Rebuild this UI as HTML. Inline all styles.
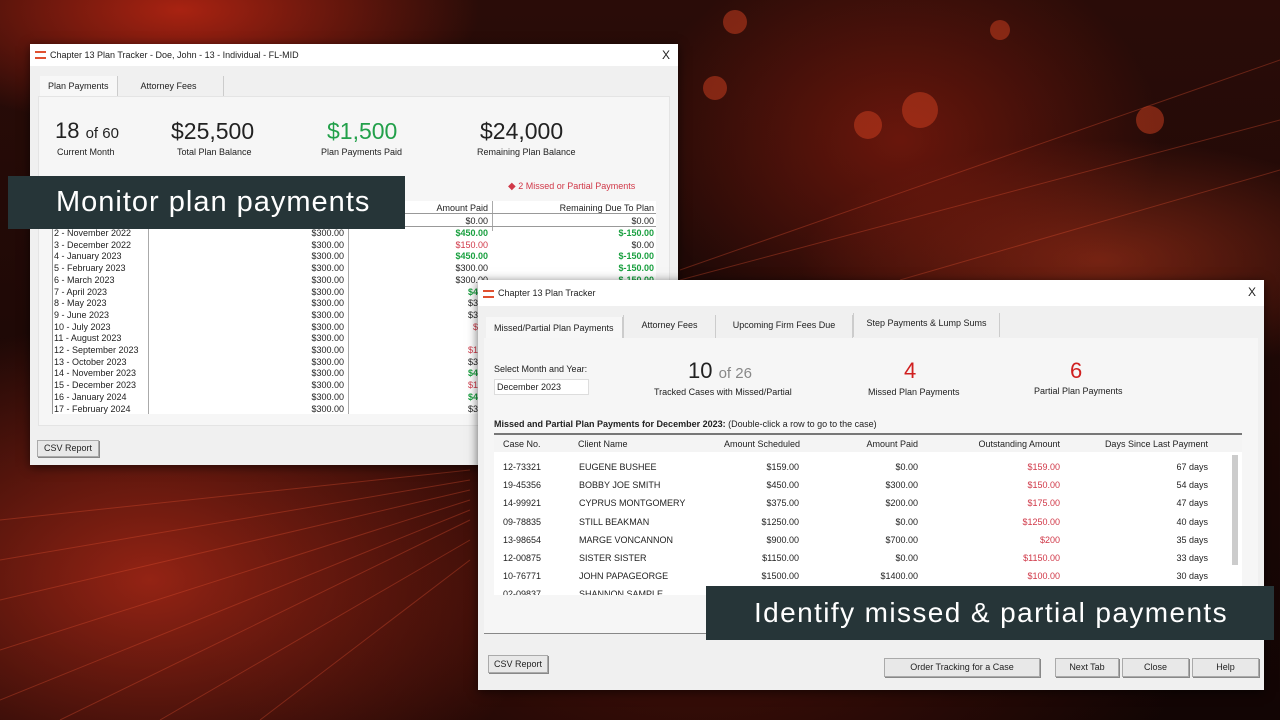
<!DOCTYPE html>
<html><head><meta charset="utf-8"><style>
*{margin:0;padding:0;box-sizing:border-box}
body{width:1280px;height:720px;overflow:hidden;position:relative;font-family:"Liberation Sans",sans-serif;background:#1a0806}
.bg{position:absolute;inset:0;background:
radial-gradient(ellipse 300px 120px at 180px 10px,rgba(200,40,20,.8),transparent),
radial-gradient(ellipse 260px 200px at 900px 140px,rgba(150,30,15,.6),transparent),
radial-gradient(ellipse 400px 260px at 150px 580px,rgba(190,45,25,.75),transparent),
radial-gradient(ellipse 300px 120px at 1100px 260px,rgba(200,60,30,.5),transparent),
radial-gradient(ellipse 500px 300px at 700px 600px,rgba(90,20,10,.7),transparent),
linear-gradient(#2a0c08,#120504)}
.win{position:absolute;background:#f0f0f0;box-shadow:0 2px 10px rgba(0,0,0,.6);font-size:9px;color:#222}
.tb{height:22px;background:#fff;display:flex;align-items:center;padding-left:20px;font-size:9px;position:relative}
.tb .ic{position:absolute;left:5px;top:7px;width:11px;height:8px;border-top:2px solid #e05030;border-bottom:2px solid #e05030}
.tb .x{position:absolute;right:8px;top:4px;font-size:12px}
.tab{position:absolute;font-size:9px;padding:0 8px;border-right:1px solid #ccc;height:20px;line-height:20px}
.cap{position:absolute;background:#263538;color:#fff;font-size:29px;font-weight:300;display:flex;align-items:center}
.t{position:absolute;white-space:nowrap}
.r{text-align:right}
.g{color:#1aa040;font-weight:bold}.red{color:#d03848}
.btn{position:absolute;border:1px solid #aaa;background:#e8e8e8;font-size:9px;text-align:center;box-shadow:1px 1px 0 #888}
</style></head><body>
<div class="bg"></div>
<svg style="position:absolute;left:0;top:0" width="1280" height="720">
<g stroke="#e05030" stroke-width="1" opacity=".35">
<line x1="0" y1="520" x2="470" y2="470"/><line x1="0" y1="560" x2="470" y2="480"/><line x1="0" y1="600" x2="470" y2="490"/><line x1="0" y1="650" x2="470" y2="500"/><line x1="0" y1="700" x2="470" y2="510"/>
<line x1="60" y1="720" x2="470" y2="520"/><line x1="160" y1="720" x2="470" y2="540"/><line x1="260" y1="720" x2="470" y2="560"/>
<line x1="680" y1="280" x2="1280" y2="120"/><line x1="680" y1="270" x2="1280" y2="60"/><line x1="900" y1="280" x2="1280" y2="170"/>
</g>
<g fill="#d04020" opacity=".5"><circle cx="735" cy="22" r="12"/><circle cx="715" cy="88" r="12"/><circle cx="868" cy="125" r="14"/><circle cx="920" cy="110" r="18"/><circle cx="1000" cy="30" r="10"/><circle cx="1150" cy="120" r="14"/></g>
</svg>

<div class="win" style="left:30px;top:44px;width:648px;height:421px">
<div class="tb"><div class="ic"></div>Chapter 13 Plan Tracker - Doe, John - 13 - Individual - FL-MID<span class="x">X</span></div>
<div class="tab" style="left:10px;top:32px;background:#f7f7f7">Plan Payments</div>
<div class="tab" style="left:84px;top:32px;width:110px;text-align:center">Attorney Fees</div>
<div style="position:absolute;left:8px;top:52px;width:632px;height:330px;background:#f6f6f6;border:1px solid #e4e4e4"></div>
<div class="t" style="left:25px;top:74px;font-size:22px">18 <span style="font-size:15px">of 60</span></div>
<div class="t" style="left:27px;top:103px">Current Month</div>
<div class="t" style="left:141px;top:74px;font-size:23px">$25,500</div>
<div class="t" style="left:147px;top:103px">Total Plan Balance</div>
<div class="t" style="left:297px;top:74px;font-size:23px;color:#22a04a">$1,500</div>
<div class="t" style="left:291px;top:103px">Plan Payments Paid</div>
<div class="t" style="left:450px;top:74px;font-size:23px">$24,000</div>
<div class="t" style="left:447px;top:103px">Remaining Plan Balance</div>
<div class="t red" style="left:478px;top:137px"><span style="font-size:10px">◆</span> 2 Missed or Partial Payments</div>
<div style="position:absolute;left:22px;top:157px;width:604px;height:213px;background:#fff;border-left:1px solid #999">
<div style="position:absolute;left:95px;top:0;bottom:0;border-left:1px solid #aaa"></div>
<div style="position:absolute;left:295px;top:0;bottom:0;border-left:1px solid #aaa"></div>
<div style="position:absolute;left:439px;top:0;height:30px;border-left:1px solid #aaa"></div>
<div style="position:absolute;left:0;right:0;top:12px;border-top:1px solid #999"></div>
<div style="position:absolute;left:0;right:0;top:25px;border-top:1px solid #999"></div>
<div class="t r" style="right:168px;top:2px">Amount Paid</div><div class="t r" style="right:2px;top:2px">Remaining Due To Plan</div>
<div class="t r" style="right:168px;top:15px">$0.00</div><div class="t r" style="right:2px;top:15px">$0.00</div>
</div>
<div id="lrows"></div>
<div class="btn" style="left:7px;top:396px;width:62px;height:17px;line-height:15px">CSV Report</div>
</div>

<div class="cap" style="left:8px;top:176px;width:397px;height:53px;padding-left:48px;letter-spacing:1px">Monitor plan payments</div>

<div class="win" style="left:478px;top:280px;width:786px;height:410px">
<div class="tb" style="height:26px"><div class="ic" style="top:10px"></div>Chapter 13 Plan Tracker<span class="x" style="top:5px">X</span></div>
<div class="tab" style="left:8px;top:37px;width:137px;height:22px;line-height:22px;background:#f7f7f7">Missed/Partial Plan Payments</div>
<div class="tab" style="left:145px;top:35px;height:24px;width:93px;text-align:center;border-left:1px solid #ccc">Attorney Fees</div>
<div class="tab" style="left:238px;top:35px;height:24px;width:137px;text-align:center">Upcoming Firm Fees Due</div>
<div class="tab" style="left:375px;top:33px;height:24px;width:147px;text-align:center;border-left:1px solid #ccc">Step Payments &amp; Lump Sums</div>
<div style="position:absolute;left:6px;top:58px;width:774px;height:296px;background:#f6f6f6;border-bottom:1px solid #888"></div>
<div class="t" style="left:16px;top:84px">Select Month and Year:</div>
<div class="t" style="left:16px;top:99px;width:95px;height:16px;background:#fff;border:1px solid #ddd;padding:2px">December 2023</div>
<div class="t" style="left:210px;top:78px;font-size:22px">10 <span style="font-size:15px;color:#888">of 26</span></div>
<div class="t" style="left:176px;top:107px">Tracked Cases with Missed/Partial</div>
<div class="t" style="left:426px;top:78px;font-size:22px;color:#d02020">4</div>
<div class="t" style="left:390px;top:107px">Missed Plan Payments</div>
<div class="t" style="left:592px;top:78px;font-size:22px;color:#d02020">6</div>
<div class="t" style="left:556px;top:106px">Partial Plan Payments</div>
<div class="t" style="left:16px;top:139px"><b style="font-weight:600">Missed and Partial Plan Payments for December 2023:</b> (Double-click a row to go to the case)</div>
<div style="position:absolute;left:16px;top:153px;width:748px;height:162px;background:#fff;border-top:2px solid #777;overflow:hidden">
<div style="position:absolute;left:0;right:0;top:0;height:17px;background:#f4f4f4"></div>
<div style="position:absolute;right:4px;top:20px;width:6px;height:110px;background:#ccc"></div>
<div id="rrows"></div>
</div>
<div class="btn" style="left:10px;top:375px;width:60px;height:18px;line-height:16px">CSV Report</div>
<div class="btn" style="left:406px;top:378px;width:156px;height:19px;line-height:17px">Order Tracking for a Case</div>
<div class="btn" style="left:577px;top:378px;width:64px;height:19px;line-height:17px">Next Tab</div>
<div class="btn" style="left:644px;top:378px;width:67px;height:19px;line-height:17px">Close</div>
<div class="btn" style="left:714px;top:378px;width:67px;height:19px;line-height:17px">Help</div>
</div>

<div class="cap" style="left:706px;top:586px;width:568px;height:54px;padding-left:48px;font-size:28px;letter-spacing:1.4px">Identify missed &amp; partial payments</div>

<script>
var L=[["2 - November 2022","g450.00","g$-150.00"],["3 - December 2022","r150.00","$0.00"],["4 - January 2023","g450.00","g$-150.00"],["5 - February 2023","$300.00","g$-150.00"],["6 - March 2023","$300.00","g$-150.00"],["7 - April 2023","g450",""],["8 - May 2023","$300",""],["9 - June 2023","$300",""],["10 - July 2023","r69",""],["11 - August 2023","r0",""],["12 - September 2023","r132",""],["13 - October 2023","$300",""],["14 - November 2023","g450",""],["15 - December 2023","r150",""],["16 - January 2024","g450",""],["17 - February 2024","$300",""]];
function c(v){if(!v)return"";if(v[0]=="g")return'<span class="g">'+(v[1]=="$"?v.slice(1):"$"+v.slice(1))+'</span>';if(v[0]=="r")return'<span class="red">$'+v.slice(1)+'</span>';return v;}
var h="";L.forEach(function(r,i){var y=184+i*11.7;h+='<div class="t" style="left:24px;top:'+y+'px">'+r[0]+'</div><div class="t r" style="right:334px;top:'+y+'px">$300.00</div><div class="t r" style="right:190px;top:'+y+'px">'+c(r[1])+'</div><div class="t r" style="right:24px;top:'+y+'px">'+c(r[2])+'</div>';});
document.getElementById("lrows").innerHTML=h;
var R=[["12-73321","EUGENE BUSHEE","$159.00","$0.00","$159.00","67"],["19-45356","BOBBY JOE SMITH","$450.00","$300.00","$150.00","54"],["14-99921","CYPRUS MONTGOMERY","$375.00","$200.00","$175.00","47"],["09-78835","STILL BEAKMAN","$1250.00","$0.00","$1250.00","40"],["13-98654","MARGE VONCANNON","$900.00","$700.00","$200","35"],["12-00875","SISTER SISTER","$1150.00","$0.00","$1150.00","33"],["10-76771","JOHN PAPAGEORGE","$1500.00","$1400.00","$100.00","30"],["02-09837","SHANNON SAMPLE","","","",""]];
h='<div class="t" style="left:9px;top:4px">Case No.</div><div class="t" style="left:84px;top:4px">Client Name</div><div class="t r" style="right:442px;top:4px">Amount Scheduled</div><div class="t r" style="right:324px;top:4px">Amount Paid</div><div class="t r" style="right:182px;top:4px">Outstanding Amount</div><div class="t r" style="right:34px;top:4px">Days Since Last Payment</div>';
R.forEach(function(r,i){var y=27+i*18.2;h+='<div class="t" style="left:9px;top:'+y+'px">'+r[0]+'</div><div class="t" style="left:85px;top:'+y+'px">'+r[1]+'</div><div class="t r" style="right:443px;top:'+y+'px">'+r[2]+'</div><div class="t r" style="right:324px;top:'+y+'px">'+r[3]+'</div><div class="t r red" style="right:182px;top:'+y+'px">'+r[4]+'</div><div class="t r" style="right:34px;top:'+y+'px">'+(r[5]?r[5]+" days":"")+'</div>';});
document.getElementById("rrows").innerHTML=h;
</script>
</body></html>
